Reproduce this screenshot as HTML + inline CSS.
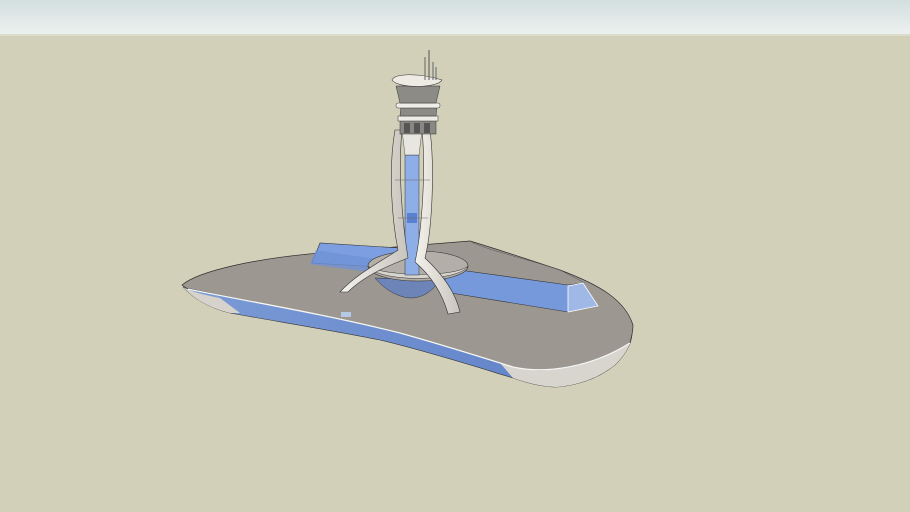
<!DOCTYPE html>
<html><head><style>html,body{margin:0;padding:0;width:910px;height:512px;overflow:hidden;background:#d2d0b9}</style></head>
<body>
<svg width="910" height="512" viewBox="0 0 910 512" xmlns="http://www.w3.org/2000/svg">
<defs>
<linearGradient id="sky" x1="0" y1="0" x2="0" y2="1"><stop offset="0" stop-color="#d3dfdf"/><stop offset="1" stop-color="#ecf1ef"/></linearGradient>
<linearGradient id="side" x1="0" y1="0" x2="1" y2="0"><stop offset="0" stop-color="#7b9ad6"/><stop offset="1" stop-color="#5d7fc6"/></linearGradient>
<linearGradient id="tw" x1="0" y1="0" x2="1" y2="0"><stop offset="0" stop-color="#f4f2ec"/><stop offset="1" stop-color="#c8c5bd"/></linearGradient>
</defs>
<rect width="910" height="34" fill="url(#sky)"/>
<rect y="34" width="910" height="2" fill="#dcdccb"/>
<!-- base side face -->
<path d="M183,287 C195,300 210,308 230,313 C280,322 330,330 380,340 C430,352 480,368 513,378 C530,384 545,387 557,387 C580,385 600,377 615,365 C625,355 631,345 632,335 L630,343 C590,368 545,374 513,367 C490,360 450,347 400,333 C320,313 240,300 186,288Z" fill="url(#side)" stroke="#333" stroke-width="0.6"/>
<path d="M183,287 C195,300 210,308 230,313 L240,313 L220,298 C205,295 192,292 183,287Z" fill="#d6d3cc"/>
<path d="M500,363 L513,378 C530,384 545,387 557,387 C580,385 600,377 615,365 C625,355 631,345 632,335 C610,360 570,372 530,370 Z" fill="#d8d5ce"/>
<!-- top face -->
<path d="M182,285 C200,270 260,258 320,253 L470,241 C500,250 530,260 560,270 C600,285 625,300 633,325 C633,333 631,338 630,343 C590,368 545,374 513,367 C490,360 450,347 400,333 C320,313 240,300 186,288 Z" fill="#9c9791" stroke="#2f2f2f" stroke-width="0.7"/>
<path d="M188,289 C240,300 320,313 400,333 C450,347 490,360 513,367 C545,374 590,368 630,343" fill="none" stroke="#f6f6f2" stroke-width="1.3"/>
<!-- glass channels -->
<path d="M312,263 L320,243 L400,248 L395,268 Z" fill="#7d9ee0" stroke="#333" stroke-width="0.6"/>
<path d="M310,264 C340,268 370,272 395,276 L398,262 C370,258 340,254 316,250Z" fill="#6f92d8" opacity="0.8"/>
<path d="M445,268 L568,285 L583,283 L598,306 L568,312 L445,292 Z" fill="#7699db" stroke="#333" stroke-width="0.6"/>
<path d="M568,286 L583,283 L598,306 L568,312Z" fill="#9fb8e6" stroke="#fff" stroke-width="0.8"/>
<path d="M470,241 C480,248 520,257 560,270 L585,283" fill="none" stroke="#555" stroke-width="0.5"/>
<rect x="341" y="312" width="10" height="5" fill="#b7c7e6"/>
<!-- pit -->
<path d="M375,278 C385,290 398,297 410,298 C422,298 432,292 440,280Z" fill="#6c84b8" stroke="#333" stroke-width="0.5"/>
<!-- disc -->
<ellipse cx="418" cy="266" rx="50" ry="15" fill="#b3aea7" stroke="#333" stroke-width="0.6"/>
<path d="M368,266 C380,276 455,278 468,266 C460,282 378,283 368,266Z" fill="#d8d5cf" stroke="#333" stroke-width="0.5"/>
<!-- shaft blue -->
<rect x="405" y="155" width="14" height="120" fill="#8eaee8" stroke="#333" stroke-width="0.5"/>
<rect x="407" y="213" width="10" height="10" fill="#5a80d0"/>
<!-- legs -->
<path d="M395,130 C388,170 392,220 398,250 C380,262 355,275 340,292 L348,292 C365,275 390,265 408,258 C402,220 398,170 402,130Z" fill="url(#tw)" stroke="#333" stroke-width="0.6"/>
<path d="M430,130 C435,170 432,230 425,258 C440,272 455,290 460,312 L448,314 C442,292 430,275 415,262 C422,230 426,170 422,130Z" fill="url(#tw)" stroke="#333" stroke-width="0.6"/>
<path d="M402,130 L422,130 L419,155 L405,155Z" fill="#e8e6e0" stroke="#333" stroke-width="0.4"/>
<line x1="395" y1="180" x2="430" y2="180" stroke="#666" stroke-width="0.5"/>
<line x1="398" y1="218" x2="428" y2="218" stroke="#666" stroke-width="0.5"/>
<!-- head -->
<rect x="400" y="120" width="36" height="14" fill="#8a8882" stroke="#333" stroke-width="0.5"/>
<rect x="404" y="123" width="6" height="10" fill="#555"/><rect x="414" y="123" width="6" height="10" fill="#555"/><rect x="424" y="123" width="6" height="10" fill="#555"/>
<rect x="398" y="116" width="40" height="5" fill="#eeece6" stroke="#333" stroke-width="0.5"/>
<path d="M401,106 L437,106 L436,116 L400,116Z" fill="#8c8a85" stroke="#333" stroke-width="0.5"/>
<rect x="396" y="103" width="44" height="5" rx="2" fill="#efede7" stroke="#333" stroke-width="0.5"/>
<path d="M396,86 L440,86 L436,103 L400,103Z" fill="#8d8b86" stroke="#333" stroke-width="0.5"/>
<path d="M392,80 C395,73 420,73 442,80 C438,88 398,89 392,80Z" fill="#eeebe5" stroke="#333" stroke-width="0.6"/>
<!-- spires -->
<line x1="429" y1="50" x2="429" y2="80" stroke="#555" stroke-width="1"/>
<line x1="425" y1="57" x2="425" y2="80" stroke="#666" stroke-width="1"/>
<line x1="433" y1="62" x2="433" y2="80" stroke="#666" stroke-width="1"/>
<line x1="436" y1="67" x2="436" y2="80" stroke="#666" stroke-width="1"/>
</svg>
</body></html>
